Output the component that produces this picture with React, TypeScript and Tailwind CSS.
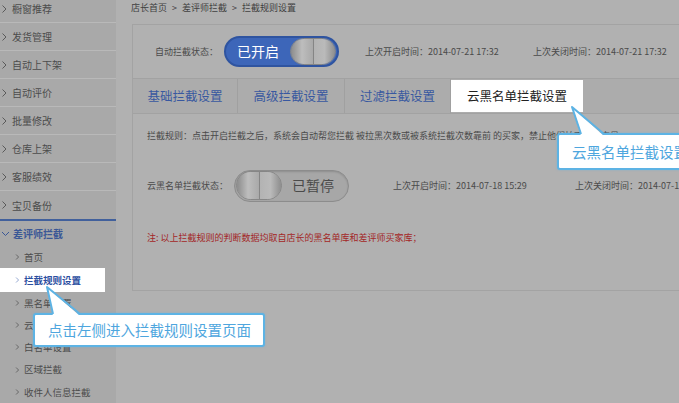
import React from "react";

const FONT = { fontFamily: '"Noto Sans CJK SC", "Noto Sans", sans-serif' };

const TOP_ITEMS = ["橱窗推荐", "发货管理", "自动上下架", "自动评价", "批量修改", "仓库上架", "客服绩效", "宝贝备份"];
const SUB_ITEMS = ["首页", "拦截规则设置", "黑名单设置", "云黑名单设置", "白名单设置", "区域拦截", "收件人信息拦截"];
const TABS = [
  { label: "基础拦截设置", w: "w-[105px]" },
  { label: "高级拦截设置", w: "w-[107px]" },
  { label: "过滤拦截设置", w: "w-[106px]" },
];

function Chevron({ size = 7, color = "#555" }: { size?: number; color?: string }) {
  return (
    <svg width={size} height={size + 3} viewBox="0 0 7 10" fill="none">
      <polyline points="1.5,1.5 5,5 1.5,8.5" stroke={color} strokeWidth="1" />
    </svg>
  );
}

function Knob({ h }: { h: string }) {
  return (
    <div className={`flex ${h} w-[46px] shrink-0 overflow-hidden rounded-full border border-[#868686]`}>
      <div className="flex-1 bg-gradient-to-r from-[#8c8c8c] via-[#bdbdbd] to-[#a9a9a9]" />
      <div className="w-px bg-[#858585]" />
      <div className="flex-1 bg-gradient-to-r from-[#b3b3b3] via-[#bababa] to-[#8e8e8e]" />
    </div>
  );
}

function Sidebar() {
  return (
    <aside className="flex w-[116px] shrink-0 flex-col bg-[#a9a9a9]">
      <div className="-mt-[5px]">
        {TOP_ITEMS.map((t, i) => (
          <div
            key={t}
            className={`flex h-[28px] items-center gap-[4px] pl-[1px] text-[10px] text-[#4c4c4c] ${
              i < TOP_ITEMS.length - 1 ? "border-b border-[#b9b9b9]" : ""
            }`}
          >
            <Chevron size={7} color="#5a5a5a" />
            {t}
          </div>
        ))}
      </div>
      <div className="h-[2px] bg-[#41609c]" />
      <div className="flex h-[26px] items-center gap-[3px] pl-[1px] text-[10px] font-bold text-[#3a5796]">
        <svg width="9" height="8" viewBox="0 0 9 8" fill="none">
          <polyline points="1,2 4.5,5.5 8,2" stroke="#3a5796" strokeWidth="1" />
        </svg>
        差评师拦截
      </div>
      {SUB_ITEMS.map((t, i) =>
        i === 1 ? (
          <div key={t} className="flex h-[24px] w-[105px] items-center gap-[4px] bg-white pl-[15px] text-[9.5px] font-semibold text-[#2b4ea0]">
            <Chevron size={5} color="#6b86bf" />
            {t}
          </div>
        ) : (
          <div key={t} className="flex h-[23px] items-center gap-[4px] pl-[15px] text-[9.5px] text-[#4c4c4c]">
            <Chevron size={5} color="#4c4c4c" />
            {t}
          </div>
        )
      )}
    </aside>
  );
}

function Panel() {
  return (
    <div className="mt-[9px] ml-px w-[620px] border border-[#a3a3a3] whitespace-nowrap">
      <div className="flex h-[54px] items-center border-b border-[#a2a2a2] pl-[22px] text-[9px] text-[#4a4a4a]">
        <span className="w-[69px] shrink-0">自动拦截状态：</span>
        <div className="flex h-[31px] w-[115px] shrink-0 items-center justify-between rounded-full border-2 border-[#2f54a0] bg-[#3d66b9] pl-[11px] pr-[1px]">
          <span className="text-[14px] text-white">已开启</span>
          <Knob h="h-[27px]" />
        </div>
        <span className="ml-[26px] w-[168px] shrink-0">上次开启时间：2014-07-21 17:32</span>
        <span className="shrink-0">上次关闭时间：2014-07-21 17:32</span>
      </div>
      <div className="flex h-[35px] border-b border-[#a2a2a2] bg-[#acacac]">
        {TABS.map((t) => (
          <div key={t.label} className={`flex ${t.w} shrink-0 items-center justify-center border-r border-[#a0a0a0] text-[12.5px] text-[#3858a0]`}>
            {t.label}
          </div>
        ))}
        <div className="my-px flex w-[132px] shrink-0 items-center justify-center bg-white text-[12.5px] text-[#222]">
          云黑名单拦截设置
        </div>
      </div>
      <div className="flex h-[176px] flex-col pl-[14px] text-[9px] text-[#4a4a4a]">
        <div className="mt-[15px]">
          拦截规则：点击开启拦截之后，系统会自动帮您拦截 被拉黑次数或被系统拦截次数靠前 的买家，禁止他们拍下您的宝贝。
        </div>
        <div className="mt-[27px] flex items-center">
          <span className="w-[87px] shrink-0">云黑名单拦截状态：</span>
          <div className="flex h-[32px] w-[115px] shrink-0 items-center gap-[10px] rounded-full border border-[#8c8c8c] bg-[#a7a7a7] pl-px shadow-[inset_0_1px_2px_rgba(0,0,0,0.15)]">
            <Knob h="h-[29px]" />
            <span className="text-[14px] text-[#4a4a4a]">已暂停</span>
          </div>
          <span className="ml-[44px] w-[182px] shrink-0">上次开启时间：2014-07-18 15:29</span>
          <span className="shrink-0">上次关闭时间：2014-07-18 15:29</span>
        </div>
        <div className="mt-[29px] text-[#a32626]">注: 以上拦截规则的判断数据均取自店长的黑名单库和差评师买家库；</div>
      </div>
    </div>
  );
}

function Callout({
  box,
  text,
  tail,
}: {
  box: string;
  text: string;
  tail: { svg: string; w: number; h: number; pts: string; fill: string };
}) {
  return (
    <>
      <div className={`absolute flex items-center whitespace-nowrap rounded-[3px] border-2 border-[#5db3e4] bg-white pl-[13px] text-[14.5px] text-[#4ea6de] shadow-[0_0_2px_rgba(93,179,228,0.6)] ${box}`}>
        {text}
      </div>
      <svg className={`absolute ${tail.svg}`} width={tail.w} height={tail.h} viewBox={`0 0 ${tail.w} ${tail.h}`}>
        <polygon points={tail.fill} fill="white" />
        <polyline points={tail.pts} fill="none" stroke="#5db3e4" strokeWidth="2" strokeLinejoin="round" />
      </svg>
    </>
  );
}

export default function App() {
  return (
    <div className="relative flex h-[403px] w-[679px] overflow-hidden bg-[#b1b1b1]" style={FONT}>
      <Sidebar />
      <main className="flex min-w-0 flex-1 flex-col pl-[15px]">
        <div className="flex pt-[1px] text-[9px] leading-[14px] text-[#404040]">
          <span>店长首页</span>
          <span className="mx-[5px]">&gt;</span>
          <span>差评师拦截</span>
          <span className="mx-[5px]">&gt;</span>
          <span>拦截规则设置</span>
        </div>
        <Panel />
      </main>
      <Callout
        box="left-[557px] top-[133px] h-[37px] w-[140px]"
        text="云黑名单拦截设置"
        tail={{ svg: "left-[566px] top-[104px]", w: 44, h: 34, pts: "15,30 6,3 38,30", fill: "15,32 6,3 38,32" }}
      />
      <Callout
        box="left-[33px] top-[313px] h-[34px] w-[232px]"
        text="点击左侧进入拦截规则设置页面"
        tail={{ svg: "left-[40px] top-[284px]", w: 46, h: 34, pts: "13,30 7,3 40,30", fill: "13,32 7,3 40,32" }}
      />
    </div>
  );
}
